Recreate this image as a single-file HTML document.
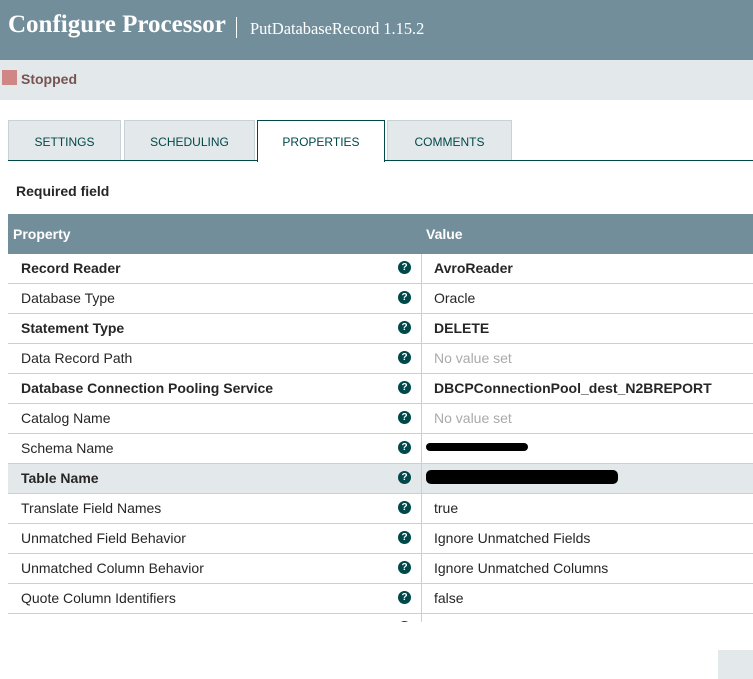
<!DOCTYPE html>
<html><head><style>
*{margin:0;padding:0;box-sizing:border-box}
body{width:753px;height:679px;overflow:hidden;background:#fff;font-family:"Liberation Sans",sans-serif;position:relative}
.hdr{position:absolute;left:0;top:0;width:753px;height:60px;background:#728e9b}
.t1{position:absolute;left:8px;top:11px;font-family:"Liberation Serif",serif;font-weight:bold;font-size:25px;color:#fff}
.sep{position:absolute;left:236px;top:17px;width:1px;height:21px;background:#fff}
.t2{position:absolute;left:250px;top:19px;font-family:"Liberation Serif",serif;font-size:16.4px;color:#fff}
.st{position:absolute;left:0;top:60px;width:753px;height:40px;background:#e3e8eb}
.sq{position:absolute;left:2px;top:70px;width:15px;height:15px;background:#d18686}
.stt{position:absolute;left:21px;top:71px;font-size:14px;font-weight:bold;color:#775351}
.tab{position:absolute;top:120px;height:41px;background:#e3e8eb;border:1px solid #c7d2d7;border-bottom:none;font-size:12px;color:#004849;text-align:center;line-height:43px}
.tline{position:absolute;left:8px;top:160px;width:745px;height:1px;background:#004849}
.req{position:absolute;left:16px;top:183px;font-size:14px;font-weight:bold;color:#262626}
.th{position:absolute;left:8px;top:214px;width:745px;height:40px;background:#728e9b;color:#fff;font-weight:bold;font-size:14px}
.row{position:absolute;left:8px;width:745px;height:30px;border-bottom:1px solid #c7d2d7;font-size:14px;color:#262626;background:#fff}
.row span{position:absolute;top:6px}
.n{left:13px}.v{left:426px}
.q{position:absolute;left:390px;top:7px;width:13px;height:13px;border-radius:50%;background:#004849;color:#fff;font-size:10px;font-weight:bold;text-align:center;line-height:13px}
.dv{position:absolute;left:413px;top:0;width:1px;height:30px;background:#c7d2d7}
.b{font-weight:bold}.g{color:#aaa}
</style></head><body>
<div class="hdr"><div class="t1">Configure Processor</div><div class="sep"></div><div class="t2">PutDatabaseRecord 1.15.2</div></div>
<div class="st"></div><div class="sq"></div><div class="stt">Stopped</div>
<div class="tab" style="left:8px;width:113px">SETTINGS</div>
<div class="tab" style="left:124px;width:131px">SCHEDULING</div>
<div class="tab" style="left:257px;width:128px;background:#fff;border:1px solid #004849;border-bottom:none;height:42px;z-index:2">PROPERTIES</div>
<div class="tab" style="left:387px;width:125px">COMMENTS</div>
<div class="tline"></div>
<div class="req">Required field</div>
<div class="th"><span style="position:absolute;left:5px;top:12px">Property</span><span style="position:absolute;left:418px;top:12px">Value</span></div>

<div class="row" style="top:254px"><span class="n b">Record Reader</span><div class="q">?</div><div class="dv"></div><span class="v b">AvroReader</span></div>
<div class="row" style="top:284px"><span class="n">Database Type</span><div class="q">?</div><div class="dv"></div><span class="v">Oracle</span></div>
<div class="row" style="top:314px"><span class="n b">Statement Type</span><div class="q">?</div><div class="dv"></div><span class="v b">DELETE</span></div>
<div class="row" style="top:344px"><span class="n">Data Record Path</span><div class="q">?</div><div class="dv"></div><span class="v g">No value set</span></div>
<div class="row" style="top:374px"><span class="n b">Database Connection Pooling Service</span><div class="q">?</div><div class="dv"></div><span class="v b">DBCPConnectionPool_dest_N2BREPORT</span></div>
<div class="row" style="top:404px"><span class="n">Catalog Name</span><div class="q">?</div><div class="dv"></div><span class="v g">No value set</span></div>
<div class="row" style="top:434px"><span class="n">Schema Name</span><div class="q">?</div><div class="dv"></div><div style="position:absolute;left:418px;top:9px;width:102px;height:8px;background:#000;border-radius:4px"></div></div>
<div class="row" style="top:464px;background:#e3e8eb"><span class="n b">Table Name</span><div class="q">?</div><div class="dv"></div><div style="position:absolute;left:418px;top:6px;width:192px;height:14px;background:#000;border-radius:5px"></div></div>
<div class="row" style="top:494px"><span class="n">Translate Field Names</span><div class="q">?</div><div class="dv"></div><span class="v">true</span></div>
<div class="row" style="top:524px"><span class="n">Unmatched Field Behavior</span><div class="q">?</div><div class="dv"></div><span class="v">Ignore Unmatched Fields</span></div>
<div class="row" style="top:554px"><span class="n">Unmatched Column Behavior</span><div class="q">?</div><div class="dv"></div><span class="v">Ignore Unmatched Columns</span></div>
<div class="row" style="top:584px"><span class="n">Quote Column Identifiers</span><div class="q">?</div><div class="dv"></div><span class="v">false</span></div>
<div class="row" style="top:614px;height:8px;overflow:hidden;border:none"><span class="n">Quote Table Identifiers</span><div class="q">?</div><div class="dv"></div><span class="v">false</span></div>
<div style="position:absolute;left:718px;top:650px;width:35px;height:29px;background:#e3e8eb"></div>
</body></html>
